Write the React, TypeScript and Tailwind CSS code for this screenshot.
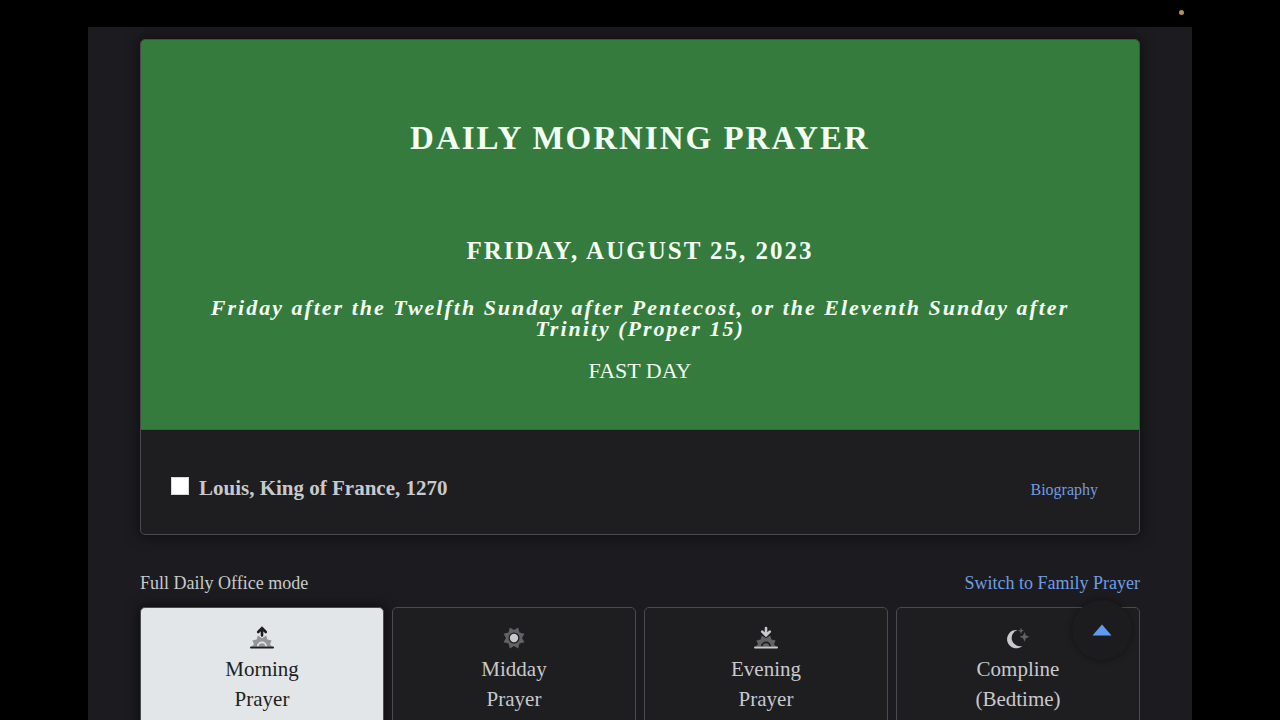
import { useState } from 'react';
import type { ReactNode } from 'react';

const SUN = 'M7.8 1.5 12 4 16.2 1.5 17.4 6.6 22.5 7.8 20 12 22.5 16.2 17.4 17.4 16.2 22.5 12 20 7.8 22.5 6.6 17.4 1.5 16.2 4 12 1.5 7.8 6.6 6.6Z';

// Top half of the sun sitting on the horizon line
const HALF_SUN =
  'M1.8 20.5 4 18.2 2.4 14.4 6.6 13.4 7.8 9.6 12 12.2 16.2 9.6 17.4 13.4 21.6 14.4 20 18.2 22.2 20.5H17A5 5 0 0 0 7 20.5ZM8.8 20.5A3.2 3.2 0 0 1 15.2 20.5Z';

function SunriseIcon() {
  return (
    <svg viewBox="0 0 24 24" className="mb-1 size-6" aria-hidden="true">
      <path d={HALF_SUN} fill="currentColor" opacity="0.4" />
      <path d="M12 9.5V3M8.2 6 12 2.2 15.8 6" fill="none" stroke="currentColor" strokeWidth="2.6" strokeLinecap="round" />
      <path d="M1 21.6H23" stroke="currentColor" strokeWidth="2" strokeLinecap="round" />
    </svg>
  );
}

function SunIcon() {
  return (
    <svg viewBox="0 0 24 24" className="mb-1 size-6" aria-hidden="true">
      <path d={SUN} fill="currentColor" opacity="0.4" />
      <circle cx="12" cy="12" r="5.5" fill="#1e1e20" />
      <circle cx="12" cy="12" r="4.2" fill="currentColor" />
    </svg>
  );
}

function SunsetIcon() {
  return (
    <svg viewBox="0 0 24 24" className="mb-1 size-6" aria-hidden="true">
      <path d={HALF_SUN} fill="currentColor" opacity="0.4" />
      <path d="M12 2V8.5M8.2 5.6 12 9.4 15.8 5.6" fill="none" stroke="currentColor" strokeWidth="2.6" strokeLinecap="round" />
      <path d="M1 21.6H23" stroke="currentColor" strokeWidth="2" strokeLinecap="round" />
    </svg>
  );
}

function MoonIcon() {
  return (
    <svg viewBox="0 0 24 24" className="mb-1 size-6" aria-hidden="true">
      <path d="M11.5 4A9.2 9.2 0 1 0 16.5 19.9 8.3 8.3 0 0 1 11.5 4Z" fill="currentColor" />
      <path d="M15 1.6 15.8 4 18.2 4.8 15.8 5.6 15 8 14.2 5.6 11.8 4.8 14.2 4ZM18.5 5.9 19.9 9.4 23.4 10.8 19.9 12.2 18.5 15.7 17.1 12.2 13.6 10.8 17.1 9.4Z" fill="currentColor" opacity="0.4" />
    </svg>
  );
}

const offices: { id: string; lines: string[]; icon: ReactNode }[] = [
  { id: 'morning', lines: ['Morning', 'Prayer'], icon: <SunriseIcon /> },
  { id: 'midday', lines: ['Midday', 'Prayer'], icon: <SunIcon /> },
  { id: 'evening', lines: ['Evening', 'Prayer'], icon: <SunsetIcon /> },
  { id: 'compline', lines: ['Compline', '(Bedtime)'], icon: <MoonIcon /> },
];

function App() {
  const [active, setActive] = useState('morning');
  const [louis, setLouis] = useState(false);

  return (
    <div className="relative flex h-screen flex-col overflow-hidden bg-black px-22 font-['Liberation_Serif',serif] text-[#c8c9cc]">
      <header className="flex h-[27px] shrink-0 items-start justify-end px-2 pt-[10px]">
        <span className="size-[5px] rounded-full bg-[#bd8c5a]" />
      </header>

      <main className="grow bg-[#1c1c20] px-13 pt-3">
        <section className="rounded-[5px] border border-[#4a4b4d] bg-[#1e1e20] shadow-[0_0_14px_2px_rgba(0,0,0,0.45)]">
          <div className="rounded-t-[4px] border-b border-[#4a5a4c] bg-[#357b3d] px-10 pt-20 pb-[46px] text-center text-[#f2fff2]">
            <h1 className="text-[33px] leading-9 font-bold tracking-[2px]">DAILY MORNING PRAYER</h1>
            <h2 className="mt-[81px] text-[25px] leading-7 font-bold tracking-[2px]">FRIDAY, AUGUST 25, 2023</h2>
            <h3 className="mt-8 text-[22px] leading-[21px] font-bold tracking-[2px] italic">
              Friday after the Twelfth Sunday after Pentecost, or the Eleventh Sunday after Trinity (Proper 15)
            </h3>
            <p className="mt-5 text-[22px] leading-6">FAST DAY</p>
          </div>
          <div className="flex items-baseline justify-between pt-[46px] pr-[41px] pb-8 pl-[30px]">
            <label className="flex items-baseline gap-[10px] text-[21px] leading-6 font-bold">
              <input
                type="checkbox"
                checked={louis}
                onChange={(e) => setLouis(e.target.checked)}
                className="size-[18px] appearance-none border border-[#d8d8d8] bg-white checked:bg-[#629af0]"
              />
              Louis, King of France, 1270
            </label>
            <a href="#biography" className="text-[16px] leading-6 text-[#709ce0]">Biography</a>
          </div>
        </section>

        <div className="mt-9 flex items-center justify-between text-[18px] leading-6">
          <span>Full Daily Office mode</span>
          <a href="#family" className="text-[#709ce0]">Switch to Family Prayer</a>
        </div>

        <nav className="mt-3 grid grid-cols-4 gap-2">
          {offices.map((office) => (
            <button
              key={office.id}
              type="button"
              onClick={() => setActive(office.id)}
              className={`flex flex-col items-center rounded-[5px] border border-[#4a4b4d] pt-[18px] pb-6 text-[21px] leading-[30px] ${
                active === office.id
                  ? 'bg-[#e2e6e9] text-[#1e1e20] shadow-[0_0_12px_2px_rgba(0,0,0,0.5)]'
                  : 'bg-[#1e1e20]'
              }`}
            >
              {office.icon}
              {office.lines.map((line) => (
                <span key={line}>{line}</span>
              ))}
            </button>
          ))}
        </nav>
      </main>

      <button
        type="button"
        aria-label="Back to top"
        className="absolute right-[148px] bottom-[60px] flex size-15 items-center justify-center rounded-full bg-[#1c1c1e] shadow-[0_0_6px_rgba(0,0,0,0.4)]"
      >
        <svg viewBox="0 0 20 12" className="h-3 w-5" aria-hidden="true">
          <path d="M10 0.5 19.5 11.5H0.5Z" fill="#629af0" />
        </svg>
      </button>
    </div>
  );
}

export default App;
